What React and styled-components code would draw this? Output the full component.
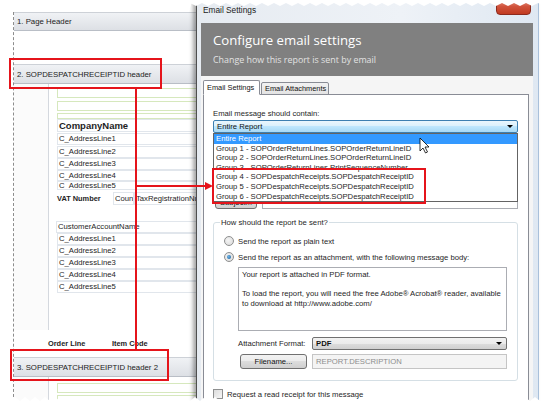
import React from 'react';
import styled, { createGlobalStyle } from 'styled-components';

const GlobalStyle = createGlobalStyle`
    html, body {
        margin: 0;
        padding: 0;
        background: #fff;
    }
    body {
        font-family: "Liberation Sans", Arial, sans-serif;
    }
`;

const Page = styled.div`
    position: relative;
    width: 550px;
    height: 419px;
    overflow: hidden;
    display: flex;
    align-items: flex-start;
    background: #fff;
`;

/* ---------- report designer (left) ---------- */

const Designer = styled.div`
    margin: 12px 0 0 13px;
    width: 182px;
    height: 390px;
    flex: none;
    display: flex;
    flex-direction: column;
    border-left: 1px dashed #8d8d8d;
    background: #fff;
    overflow: hidden;
`;

const Band = styled.div`
    flex: none;
    height: ${(p) => p.$h || 20}px;
    box-sizing: border-box;
    display: flex;
    align-items: center;
    padding-left: 3px;
    background: linear-gradient(#f0f2f5, #dde0e5);
    border-top: 1px solid #cdd1d7;
    border-bottom: 1px solid #b9bec6;
    font-size: 7.8px;
    color: #222;
    white-space: nowrap;
`;

const Section = styled.div`
    flex: none;
    height: ${(p) => p.$h}px;
    display: flex;
    flex-direction: column;
`;

const SectionBody = styled.div`
    flex: 1;
    display: flex;
    min-height: 0;
`;

const Gutter = styled.div`
    width: 34px;
    flex: none;
    background: #fbfbfb;
`;

const DesignArea = styled.div`
    flex: 1;
    min-width: 0;
    border-left: 1px solid #d4d8de;
    background: #fff;
    padding-left: 8px;
    display: flex;
    flex-direction: column;
    overflow: hidden;
`;

const Field = styled.div`
    flex: none;
    box-sizing: border-box;
    height: ${(p) => p.$h || 12}px;
    margin-top: ${(p) => p.$mt || 0}px;
    margin-left: ${(p) => p.$ml || 0}px;
    width: ${(p) => p.$w || 160}px;
    border: 1px solid ${(p) => (p.$green ? '#d6e8bd' : '#e1e6ec')};
    padding-left: 1px;
    font-size: ${(p) => p.$size || 7.7}px;
    font-weight: ${(p) => (p.$bold ? 700 : 400)};
    line-height: ${(p) => (p.$h || 12) - 2}px;
    color: #1e1e1e;
    white-space: nowrap;
    overflow: hidden;
`;

const VatRow = styled.div`
    flex: none;
    display: flex;
    align-items: center;
    height: 13px;
    margin-top: 2px;
`;

const BoldLabel = styled.span`
    font-size: 7.4px;
    font-weight: 700;
    color: #1e1e1e;
    width: ${(p) => p.$w}px;
    flex: none;
    white-space: nowrap;
`;

const ColumnHeads = styled.div`
    flex: none;
    height: 27px;
    display: flex;
    align-items: center;
    padding-left: 34px;
`;

/* ---------- dialog (right) ---------- */

const Dialog = styled.div`
    position: relative;
    width: 341px;
    height: 402px;
    flex: none;
    display: flex;
    flex-direction: column;
    background: linear-gradient(90deg, #e6ebf1, #eef2f7 60%, #dfe8f2);
    border-left: 1px solid #4f4f4f;
    border-right: 1px solid #a9c0da;
    box-shadow: -3px 0 4px rgba(0, 0, 0, 0.35);
`;

const TitleBar = styled.div`
    flex: none;
    height: 22px;
    display: flex;
    align-items: flex-start;
    padding-left: 6px;
`;

const TitleText = styled.span`
    margin-top: 5px;
    font-size: 8.3px;
    color: #1b1b1b;
`;

const CloseBtn = styled.div`
    margin-left: auto;
    margin-right: 7px;
    margin-top: -2px;
    width: 33px;
    height: 15px;
    border-radius: 0 0 4px 4px;
    border: 1px solid #8c2a1d;
    background: linear-gradient(#e8a08e, #d0533c 50%, #c13a20);
`;

const Content = styled.div`
    flex: 1;
    margin: 1px 5px 0 4px;
    display: flex;
    flex-direction: column;
    background: #f5f5f5;
    min-height: 0;
`;

const Header = styled.div`
    flex: none;
    height: 53px;
    box-sizing: border-box;
    padding: 9px 12px 0;
    background: #808080;
`;

const HeaderTitle = styled.div`
    font-family: "Open Sans", "Noto Sans", sans-serif;
    font-size: 13.2px;
    line-height: 17px;
    color: #fff;
`;

const HeaderSub = styled.div`
    margin-top: 5px;
    font-family: "Open Sans", "Noto Sans", sans-serif;
    font-size: 8.9px;
    line-height: 11px;
    color: #e2e2e2;
`;

const TabRow = styled.div`
    flex: none;
    display: flex;
    align-items: flex-end;
    height: 15px;
    margin: 4px 0 -1px 2px;
    position: relative;
    z-index: 1;
`;

const Tab = styled.div`
    box-sizing: border-box;
    height: ${(p) => (p.$active ? 15 : 13)}px;
    width: ${(p) => p.$w}px;
    margin-left: ${(p) => (p.$active ? 0 : 1)}px;
    border: 1px solid #898c95;
    border-bottom: ${(p) => (p.$active ? '1px solid #fff' : '1px solid #898c95')};
    border-radius: 2px 2px 0 0;
    background: ${(p) => (p.$active ? '#fff' : 'linear-gradient(#f2f2f2, #e3e3e3)')};
    font-size: 7.4px;
    line-height: ${(p) => (p.$active ? 13 : 11)}px;
    padding-left: 3px;
    color: #111;
    white-space: nowrap;
`;

const Panel = styled.div`
    flex: 1;
    margin: 0 4px 0 2px;
    border: 1px solid #898c95;
    background: #fff;
    padding: 0 10px 0 9px;
    display: flex;
    flex-direction: column;
    min-height: 0;
`;

const Label = styled.div`
    flex: none;
    width: ${(p) => (p.$w ? `${p.$w}px` : 'auto')};
    margin-top: ${(p) => p.$mt || 0}px;
    font-size: 7.7px;
    line-height: 11px;
    color: #1e1e1e;
    white-space: nowrap;
`;

const ComboWrap = styled.div`
    position: relative;
    flex: none;
    margin-top: 1px;
    height: 13px;
`;

const Combo = styled.div`
    box-sizing: border-box;
    height: 13px;
    display: flex;
    align-items: center;
    padding: 0 4px 0 3px;
    border: 1px solid ${(p) => (p.$open ? '#3c7fb1' : '#707070')};
    border-radius: 2px;
    background: ${(p) =>
        p.$open
            ? 'linear-gradient(#eaf6fd, #d9f0fc 50%, #bee6fd 50%, #a7d9f5)'
            : 'linear-gradient(#f2f2f2, #ebebeb 50%, #dddddd 50%, #cfcfcf)'};
    font-size: 7.7px;
    font-weight: ${(p) => (p.$bold ? 700 : 400)};
    color: #111;
    flex: 1;
`;

const Arrow = styled.span`
    margin-left: auto;
    width: 0;
    height: 0;
    border-left: 3px solid transparent;
    border-right: 3px solid transparent;
    border-top: 3px solid #000;
`;

const DropList = styled.div`
    position: absolute;
    top: 100%;
    left: 0;
    right: 0;
    z-index: 3;
    box-sizing: border-box;
    border: 1px solid #646464;
    background: #fff;
    display: flex;
    flex-direction: column;
`;

const DropItem = styled.div`
    height: 9.6px;
    line-height: 9.6px;
    padding-left: 2px;
    font-size: 7.7px;
    white-space: nowrap;
    color: ${(p) => (p.$sel ? '#fff' : '#1e1e1e')};
    background: ${(p) => (p.$sel ? '#3399ff' : 'transparent')};
`;

const Row = styled.div`
    flex: none;
    display: flex;
    align-items: center;
    height: ${(p) => p.$h || 13}px;
    margin-top: ${(p) => p.$mt || 0}px;
    margin-left: ${(p) => p.$ml || 0}px;
`;

const Button = styled.div`
    box-sizing: border-box;
    flex: none;
    width: ${(p) => p.$w}px;
    height: 100%;
    margin-left: ${(p) => p.$ml || 0}px;
    border: 1px solid #707070;
    border-radius: 3px;
    background: linear-gradient(#f2f2f2, #ebebeb 50%, #dddddd 50%, #cfcfcf);
    display: flex;
    align-items: center;
    justify-content: center;
    font-size: 7.7px;
    color: #111;
`;

const TextBox = styled.div`
    box-sizing: border-box;
    flex: 1;
    height: 100%;
    margin-left: 5px;
    border: 1px solid ${(p) => (p.$disabled ? '#c5c5c5' : '#abadb3')};
    background: ${(p) => (p.$disabled ? '#f4f4f4' : '#fff')};
    display: flex;
    align-items: center;
    padding-left: 3px;
    font-size: 7.7px;
    color: ${(p) => (p.$disabled ? '#8d8d8d' : '#111')};
`;

const GroupBox = styled.div`
    position: relative;
    flex: none;
    margin-top: 13px;
    height: 159px;
    box-sizing: border-box;
    border: 1px solid #d5dfe5;
    border-radius: 3px;
    padding: 12px 10px 0 10px;
    display: flex;
    flex-direction: column;
`;

const Legend = styled.span`
    position: absolute;
    top: -6px;
    left: 6px;
    padding: 0 1px;
    background: #fff;
    font-size: 7.7px;
    line-height: 11px;
    color: #1e1e1e;
`;

const Radio = styled.span`
    box-sizing: border-box;
    flex: none;
    width: 10px;
    height: 10px;
    border-radius: 50%;
    border: 1px solid #8e8f8f;
    background: radial-gradient(circle at 40% 40%, #f4f4f4, #d8d8d8);
    margin-right: 4px;
    display: flex;
    align-items: center;
    justify-content: center;
    &::after {
        content: '';
        display: ${(p) => (p.$checked ? 'block' : 'none')};
        width: 4px;
        height: 4px;
        border-radius: 50%;
        background: radial-gradient(circle at 40% 40%, #6fb4e6, #145a98);
    }
`;

const Check = styled.span`
    box-sizing: border-box;
    flex: none;
    width: 10px;
    height: 10px;
    border: 1px solid #8e8f8f;
    background: linear-gradient(135deg, #dcdcdc, #f6f6f6);
    margin-right: 4px;
`;

const Memo = styled.div`
    flex: none;
    box-sizing: border-box;
    margin: 4px 0 0 14px;
    height: 64px;
    border: 1px solid #abadb3;
    padding: 2px 3px;
    font-size: 7.7px;
    line-height: 9.5px;
    color: #1e1e1e;
`;

/* ---------- annotations ---------- */

const Overlay = styled.svg`
    position: absolute;
    left: 0;
    top: 0;
    pointer-events: none;
    z-index: 5;
`;

const RedBox = styled.div`
    position: absolute;
    z-index: 6;
    box-sizing: border-box;
    left: ${(p) => p.$x}px;
    top: ${(p) => p.$y}px;
    width: ${(p) => p.$w}px;
    height: ${(p) => p.$h}px;
    border: 2.5px solid #e5141b;
`;

const addressLines = [1, 2, 3, 4, 5];

const groups = [
    'Group 1 - SOPOrderReturnLines.SOPOrderReturnLineID',
    'Group 2 - SOPOrderReturnLines.SOPOrderReturnLineID',
    'Group 3 - SOPOrderReturnLines.PrintSequenceNumber',
    'Group 4 - SOPDespatchReceipts.SOPDespatchReceiptID',
    'Group 5 - SOPDespatchReceipts.SOPDespatchReceiptID',
    'Group 6 - SOPDespatchReceipts.SOPDespatchReceiptID',
];

function tornPath(y0, amp, x0, x1, step, down) {
    let d = `M${x0} ${down ? y0 + 20 : y0 - 20}`;
    let i = 0;
    for (let x = x0; x <= x1; x += step) {
        const dy = i % 2 === 0 ? 0 : amp;
        d += ` L${x} ${down ? y0 - dy : y0 + dy}`;
        i += 1;
    }
    d += ` L${x1} ${down ? y0 + 20 : y0 - 20} Z`;
    return d;
}

export default function App() {
    return (
        <>
            <GlobalStyle />
            <Page>
                <Designer>
                    <Band $h={19}>1. Page Header</Band>
                    <Section $h={33} />
                    <Band>2. SOPDESPATCHRECEIPTID header</Band>
                    <Section $h={273}>
                        <SectionBody>
                            <Gutter />
                            <DesignArea>
                                <Field $green $mt={4} $h={10} />
                                <Field $green $mt={3} $h={10} />
                                <Field $green $mt={2} $h={6} />
                                <Field $h={13} $bold $size={9.5}>
                                    CompanyName
                                </Field>
                                {addressLines.map((n) => (
                                    <Field
                                        key={`a${n}`}
                                        $mt={n <= 2 ? 1 : 0}
                                        $h={n === 4 ? 11 : n === 5 ? 9 : 12}
                                    >
                                        C_AddressLine{n}
                                    </Field>
                                ))}
                                <VatRow>
                                    <BoldLabel $w={56}>VAT Number</BoldLabel>
                                    <Field $w={21} $h={13}>
                                        Coun
                                    </Field>
                                    <Field $w={80} $h={13}>
                                        TaxRegistrationNumber
                                    </Field>
                                </VatRow>
                                <Field $mt={16} $ml={-1}>
                                    CustomerAccountName
                                </Field>
                                {addressLines.map((n) => (
                                    <Field key={`c${n}`}>C_AddressLine{n}</Field>
                                ))}
                            </DesignArea>
                        </SectionBody>
                        <ColumnHeads>
                            <BoldLabel $w={64}>Order Line</BoldLabel>
                            <BoldLabel $w={60}>Item Code</BoldLabel>
                        </ColumnHeads>
                    </Section>
                    <Band>3. SOPDESPATCHRECEIPTID header 2</Band>
                    <Section $h={40}>
                        <SectionBody>
                            <Gutter />
                            <DesignArea>
                                <Field $green $mt={6} $h={10} />
                                <Field $green $mt={2} $h={10} />
                            </DesignArea>
                        </SectionBody>
                    </Section>
                </Designer>

                <Dialog>
                    <TitleBar>
                        <TitleText>Email Settings</TitleText>
                        <CloseBtn />
                    </TitleBar>
                    <Content>
                        <Header>
                            <HeaderTitle>Configure email settings</HeaderTitle>
                            <HeaderSub>Change how this report is sent by email</HeaderSub>
                        </Header>
                        <TabRow>
                            <Tab $active $w={57}>
                                Email Settings
                            </Tab>
                            <Tab $w={68}>Email Attachments</Tab>
                        </TabRow>
                        <Panel>
                            <Label $mt={13}>Email message should contain:</Label>
                            <ComboWrap>
                                <Combo $open>
                                    Entire Report
                                    <Arrow />
                                </Combo>
                                <DropList>
                                    <DropItem $sel>Entire Report</DropItem>
                                    {groups.map((g, i) => (
                                        <DropItem key={i}>{g}</DropItem>
                                    ))}
                                </DropList>
                            </ComboWrap>
                            <Row $mt={63} $h={13}>
                                <Button $w={42} $ml={2}>
                                    Subject...
                                </Button>
                                <TextBox />
                            </Row>
                            <GroupBox>
                                <Legend>How should the report be sent?</Legend>
                                <Row $h={12}>
                                    <Radio />
                                    <Label>Send the report as plain text</Label>
                                </Row>
                                <Row $h={12} $mt={4}>
                                    <Radio $checked />
                                    <Label>
                                        Send the report as an attachment, with the following
                                        message body:
                                    </Label>
                                </Row>
                                <Memo>
                                    Your report is attached in PDF format.
                                    <br />
                                    <br />
                                    To load the report, you will need the free Adobe® Acrobat®
                                    reader, available
                                    <br />
                                    to download at http://www.adobe.com/
                                </Memo>
                                <Row $h={15} $mt={5} $ml={14}>
                                    <Label $w={74}>Attachment Format:</Label>
                                    <Combo $bold>
                                        PDF
                                        <Arrow />
                                    </Combo>
                                </Row>
                                <Row $h={15} $mt={3} $ml={16}>
                                    <Button $w={67}>Filename...</Button>
                                    <TextBox $disabled>REPORT.DESCRIPTION</TextBox>
                                </Row>
                            </GroupBox>
                            <Row $h={12} $mt={7}>
                                <Check />
                                <Label>Request a read receipt for this message</Label>
                            </Row>
                        </Panel>
                    </Content>
                </Dialog>

                <Overlay width="550" height="419" viewBox="0 0 550 419">
                    {/* torn paper edges */}
                    <path d={tornPath(3, 3, 190, 545, 6, false)} fill="#fff" />
                    <path d={tornPath(10, 2, 0, 195, 7, false)} fill="#fff" />
                    <path d={tornPath(401, 4, 0, 545, 5, true)} fill="#fff" />
                    {/* connector line and arrow */}
                    <line x1="136" y1="88" x2="136" y2="350" stroke="#e5141b" strokeWidth="2" />
                    <line x1="135" y1="186" x2="206" y2="186" stroke="#e5141b" strokeWidth="2" />
                    <polygon points="205,182 213,186 205,190" fill="#e5141b" />
                    {/* mouse pointer */}
                    <path
                        d="M420 138 L420 151 L423 148 L425.5 153 L427.5 152 L425 147 L429 147 Z"
                        fill="#fff"
                        stroke="#000"
                        strokeWidth="0.8"
                        strokeLinejoin="round"
                    />
                </Overlay>
                <RedBox $x={9} $y={58} $w={153} $h={31} />
                <RedBox $x={10} $y={349} $w={159} $h={32} />
                <RedBox $x={212} $y={168} $w={214} $h={36} />
            </Page>
        </>
    );
}
